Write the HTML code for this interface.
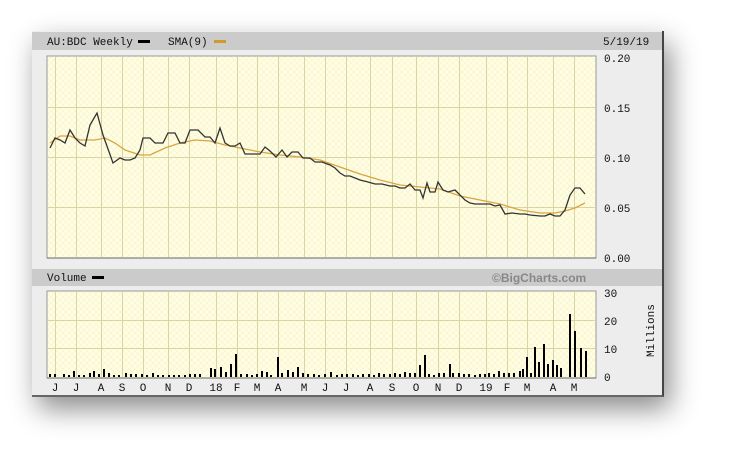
<!DOCTYPE html>
<html><head><meta charset="utf-8"><style>
html,body{margin:0;padding:0;background:#fff;width:729px;height:460px;overflow:hidden}
#f{position:absolute;left:32px;top:31px;width:630px;height:364px;background:#ededed;border-right:2px solid #444;border-bottom:2px solid #666;box-shadow:6px 12px 26px rgba(0,0,0,.45)}
svg{position:absolute;left:0;top:0}
text{font-family:"Liberation Mono",monospace;font-size:11px;fill:#111}
</style></head><body>
<div id="f"></div>
<svg width="729" height="460" id="s">
<defs><pattern id="h" width="6" height="6" patternUnits="userSpaceOnUse"><rect width="6" height="6" fill="#fffee2"/><path d="M0 6L6 0M0 0L6 6" stroke="#f5f2cf" stroke-width="0.6"/></pattern></defs>
<rect x="32" y="32" width="630" height="18" fill="#cbcbcb"/>
<text x="47" y="45">AU:BDC Weekly</text><rect x="138" y="40" width="12" height="3" fill="#000"/>
<text x="168" y="45">SMA(9)</text><rect x="214" y="40" width="12" height="3" fill="#d29a2a"/>
<text x="603" y="45">5/19/19</text>
<rect x="47" y="56" width="549" height="202" fill="url(#h)" stroke="#999" stroke-width="1"/>
<rect x="32" y="269" width="630" height="17" fill="#cbcbcb"/>
<text x="47" y="281">Volume</text><rect x="92" y="276" width="12" height="3" fill="#000"/>
<text x="492" y="282" style="font-family:'Liberation Sans',sans-serif;font-weight:bold;font-size:12px;fill:#888">©BigCharts.com</text>
<rect x="47" y="291" width="549" height="87" fill="url(#h)" stroke="#999" stroke-width="1"/>
<g id="g" stroke="#d8d5a0" stroke-width="1"></g>
<text x="604" y="62">0.20</text><text x="604" y="112">0.15</text><text x="604" y="162">0.10</text><text x="604" y="212">0.05</text><text x="604" y="262">0.00</text>
<text x="604" y="297">30</text><text x="604" y="325">20</text><text x="604" y="353">10</text><text x="604" y="381">0</text>
<text transform="translate(654,357) rotate(-90)">Millions</text>
<g id="lb"></g>
<polyline id="sma" fill="none" stroke="#d9a441" stroke-width="1.3"/>
<polyline id="pr" fill="none" stroke="#333" stroke-width="1.3"/>
<g id="vb" fill="#000"></g>
<line x1="47" y1="258" x2="596" y2="258" stroke="#666"/><line x1="47" y1="378" x2="596" y2="378" stroke="#666"/>
</svg>
<script>
var N="http://www.w3.org/2000/svg",s=document.getElementById('s');
function el(p,t,a,tx){var e=document.createElementNS(N,t);for(var k in a)e.setAttribute(k,a[k]);if(tx)e.textContent=tx;document.getElementById(p).appendChild(e);}
var gx=[55,76,101,122,143,168,189,216,237,257,278,304,325,346,370,392,416,438,459,486,507,527,553,574];
var lab="J J A S O N D 18 F M A M J J A S O N D 19 F M A M".split(" ");
gx.forEach(function(x,i){el('g','line',{x1:x+.5,y1:57,x2:x+.5,y2:257});el('g','line',{x1:x+.5,y1:292,x2:x+.5,y2:377});
el('lb','text',{x:x,y:391,'text-anchor':'middle'},lab[i]);});
[107,157,207].forEach(function(y){el('g','line',{x1:48,y1:y+.5,x2:595,y2:y+.5});});
[320,348].forEach(function(y){el('g','line',{x1:48,y1:y+.5,x2:595,y2:y+.5});});
document.getElementById('pr').setAttribute('points',"50,148 55,138 60,140 65,143 70,130 75,138 80,143 85,146 90,125 97,113 103,135 113,163 120,158 125,160 130,160 135,158 140,150 143,138 150,138 155,143 163,143 168,133 175,133 180,143 185,143 190,130 198,130 205,137 210,137 215,143 220,128 225,143 230,146 235,146 240,143 245,154 252,154 260,154 265,147 270,151 276,157 282,150 287,157 292,152 298,152 303,158 310,158 315,162 322,162 330,165 335,168 340,173 345,176 350,176 355,178 360,180 368,182 375,184 382,184 390,186 395,186 400,188 405,188 410,184 415,190 420,190 423,198 427,183 430,192 435,192 438,182 443,190 448,192 455,190 460,195 465,200 470,203 475,204 480,204 490,204 495,206 500,205 505,214 512,213 520,214 525,214 530,215 540,216 545,216 550,214 555,216 560,216 565,210 570,195 575,188 580,188 585,194");
document.getElementById('sma').setAttribute('points',"50,143 60,136 70,136 80,140 95,140 105,138 115,143 125,150 140,155 150,155 165,148 180,143 195,140 210,141 225,145 240,148 260,152 280,155 300,157 320,160 340,167 360,174 380,180 400,185 420,187 440,189 460,196 480,200 500,204 520,210 540,213 555,213 565,211 575,208 585,203");
var v=[[49,3],[54,3],[63,3],[68,2],[73,6],[78,2],[83,2],[89,4],[93,6],[98,3],[103,8],[108,4],[113,2],[118,2],[125,4],[130,3],[135,3],[141,3],[146,2],[152,4],[157,2],[162,2],[168,2],[173,2],[178,2],[184,2],[189,3],[194,3],[199,3],[210,9],[214,8],[220,10],[225,5],[230,13],[235,23],[240,3],[246,3],[251,2],[256,3],[261,6],[266,5],[270,2],[277,20],[281,4],[287,7],[292,5],[297,10],[302,4],[307,3],[313,3],[318,2],[324,3],[330,5],[336,2],[341,3],[346,3],[352,3],[357,2],[362,3],[368,3],[373,2],[378,4],[383,3],[389,3],[394,4],[399,3],[404,5],[409,4],[414,4],[419,12],[424,22],[428,3],[433,2],[438,4],[443,4],[449,13],[452,4],[458,4],[463,3],[468,3],[474,2],[479,3],[484,3],[488,4],[493,3],[498,6],[503,4],[508,4],[513,4],[519,6],[522,8],[526,20],[530,4],[534,30],[538,15],[543,33],[547,13],[552,17],[556,12],[560,9],[569,63],[574,46],[580,29],[585,26]];
v.forEach(function(b){el('vb','rect',{x:b[0],y:377-b[1],width:2,height:b[1]});});
</script>
</body></html>
